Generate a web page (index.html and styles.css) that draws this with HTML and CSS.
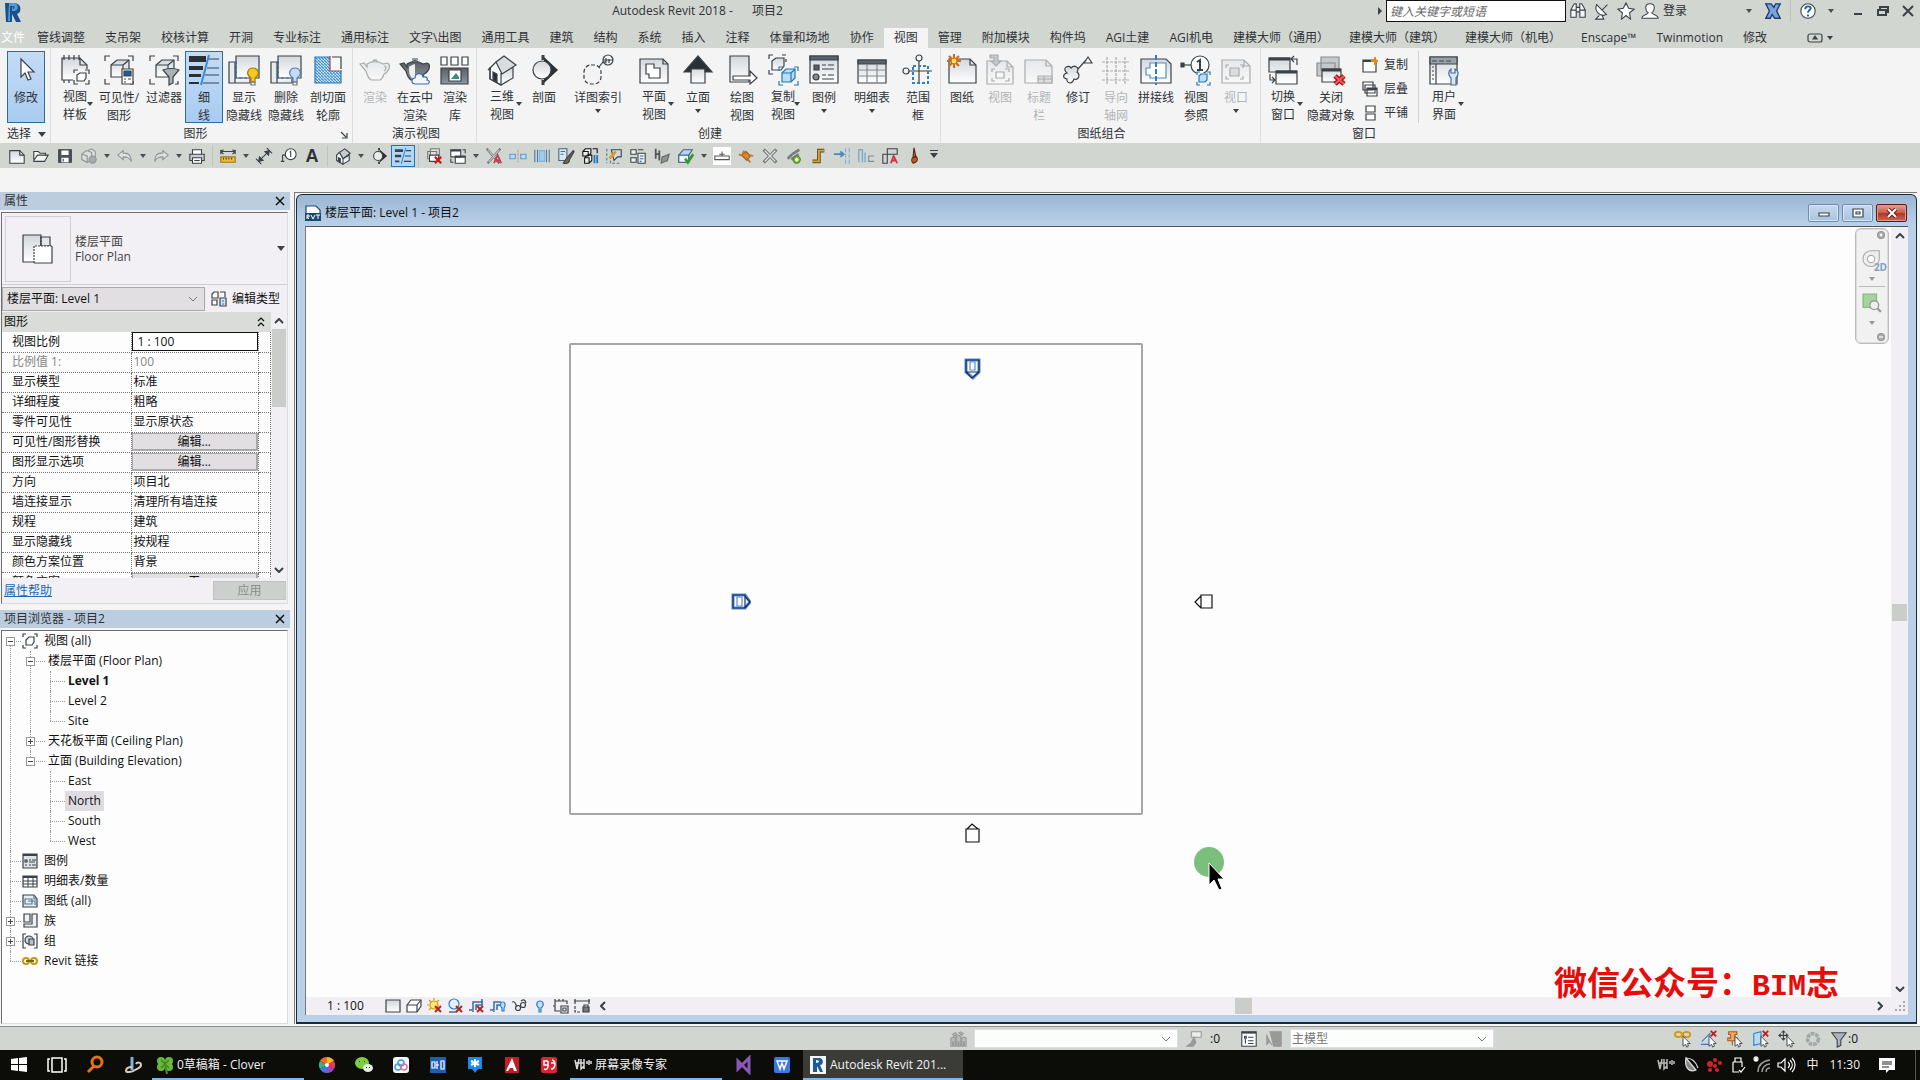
FILE: index.html
```html
<!DOCTYPE html>
<html lang="zh-CN">
<head>
    <meta charset="UTF-8">
    <meta name="viewport" content="width=device-width, initial-scale=1.0">
    <title>Autodesk Revit 2018 - 项目2</title>
    <link rel="stylesheet" href="styles.css">
</head>
<body>
    <!-- Icon sprite -->
    <svg class="sprite" aria-hidden="true">
        <defs>
            <linearGradient id="g" x1="0" y1="0" x2="0" y2="1"><stop offset="0" stop-color="#d3d7db"/><stop offset="1" stop-color="#ffffff"/></linearGradient>
            <linearGradient id="gd" x1="0" y1="0" x2="0" y2="1"><stop offset="0" stop-color="#5a5f66"/><stop offset="1" stop-color="#8f959c"/></linearGradient>
            <pattern id="hatch" width="3" height="3" patternUnits="userSpaceOnUse"><path d="M0 0l3 3" stroke="#3d8fd0" stroke-width="1.3"/></pattern>
        </defs>

        <!-- ribbon, 32px -->
        <symbol id="i-modify" viewBox="0 0 32 32"><path fill="#fff" d="M11 5v18l4-4 3 7 3-1-3-7h6z"/></symbol>
        <symbol id="i-template" viewBox="0 0 32 32"><path fill="url(#g)" d="M3 4h18l7 7v15H3z"/><path d="M5 1v5M10 1v5M15 1v5M20 1v5M5 26v3M10 26v3M21 4v7h7"/><path fill="#f4f4f4" stroke="none" d="M14 15h17v16H14z"/><path d="M15 19v-3h4M26 16h4v4M30 26v4h-4M19 30h-4v-4"/><path fill="#fff" d="M18 21l3-2h6v5l-2 3h-7z"/></symbol>
        <symbol id="i-visible" viewBox="0 0 32 32"><path d="M2 7V2h5M25 2h5v5M7 30H2v-5M30 27v3h-3"/><path fill="url(#g)" d="M8 11l6-5h12v11l-5 6H8z"/><path d="M8 11h12v12M20 11l6-5"/><path fill="#fff" d="M19 15h11v15H19z"/><path fill="#1f5c99" d="M21 17h7v5h-7z"/><path d="M21 25h2M25 25h3M21 28h2"/></symbol>
        <symbol id="i-filter" viewBox="0 0 32 32"><path d="M2 7V2h5M25 2h5v5M7 30H2v-5M30 27v3h-3"/><path fill="url(#g)" d="M8 11l6-5h12v11l-5 6H8z"/><path d="M8 11h12v6M20 11l6-5"/><path fill="#a9b0b6" d="M15 16c4-2 12-2 16 0l-6 7v6l-4 2v-8z"/></symbol>
        <symbol id="i-thin" viewBox="0 0 32 32"><path fill="#2b3036" stroke="none" d="M1 2h17v6H1zM1 12h14v4H1zM1 20h12v3H1zM1 28h10v2H1z"/><path d="M20 5h11M19 14h12M17 21h14M15 29h16"/><path stroke="#3c8ad8" stroke-width="2" d="M21 1l-8 30"/></symbol>
        <symbol id="i-showhid" viewBox="0 0 32 32"><path fill="url(#g)" d="M8 2h23v22H8z"/><path fill="#e6e8ea" fill-opacity=".8" d="M1 8h6v21H1zM1 29h21v-4"/><path stroke="#2d6cb5" stroke-dasharray="3 2" d="M8 7v17h14"/><path fill="#f7c820" stroke="#a97a08" d="M23 24c-6-4-3-10 2-10s8 6 2 10v4h-4z"/><path stroke="#777" d="M23 28h4v3h-4z"/></symbol>
        <symbol id="i-delhid" viewBox="0 0 32 32"><path fill="url(#g)" d="M8 2h23v22H8z"/><path fill="#e6e8ea" fill-opacity=".8" d="M1 8h6v21H1zM1 29h21v-4"/><path stroke="#2d6cb5" stroke-dasharray="3 2" d="M8 7v17h14"/><path fill="#c4dcf6" stroke="#4c7fb5" d="M23 24c-6-4-3-10 2-10s8 6 2 10v4h-4z"/><path stroke="#777" d="M23 28h4v3h-4z"/></symbol>
        <symbol id="i-profile" viewBox="0 0 32 32"><path fill="#d5e9f8" stroke="none" d="M3 3h26v26H3z"/><path fill="url(#hatch)" stroke="#2b78c0" d="M3 3h26v26H3z"/><path fill="#f7f7f7" stroke="none" d="M18 2h12v15H18z"/><path stroke="#a34046" d="M18 2v15h12"/><path d="M20 3h9v12"/></symbol>
        <symbol id="i-teapot" viewBox="0 0 32 32"><path fill="url(#g)" d="M8 10c4-3 12-3 16 0l4-1c4 1 3 8-3 11-1 3-2 5-4 6H12c-3-2-4-5-5-9L1 10l4-1 3 4z"/><path d="M13 8c1-2 5-2 6 0M14 6h4M25 12c3 0 2 4 0 5"/></symbol>
        <symbol id="i-cloud" viewBox="0 0 32 32"><path fill="url(#gd)" d="M8 10c4-3 12-3 16 0l4-1c4 1 3 8-3 11-1 3-2 5-4 6H12c-3-2-4-5-5-9L1 10l4-1 3 4z"/><path d="M13 8c1-2 5-2 6 0M13 5h6"/><path fill="#eee" stroke="none" d="M10 13c2-2 6-3 6-3v14h-3c-3-3-3-7-3-11z"/><path fill="#f2f7ff" stroke="#3c69b0" d="M16 30c-5-1-3-6 0-6 0-5 7-6 8-1 4-1 5 2 4 3 4 1 2 4 0 4z"/></symbol>
        <symbol id="i-gallery" viewBox="0 0 32 32"><path fill="#fff" d="M2 3h6v8H2zM12 3h7v8h-7zM23 3h6v8h-6z"/><path fill="url(#gd)" d="M2 14h27v16H2z"/><path fill="#fff" d="M10 16h12v11H10z"/><path fill="#3f8c82" stroke="none" d="M12 25l5-6 3 4v2z"/></symbol>
        <symbol id="i-house" viewBox="0 0 32 32"><path fill="url(#g)" d="M4 14l11 6 12-7v11l-12 7-11-6z"/><path fill="#fafbfc" stroke="none" d="M5 14l5-5 5 10v11L5 25z"/><path fill="#d9dde1" d="M10 8l8-6 12 9-14 9z"/><path d="M10 8l-8 8M4 14v11l11 6V19"/><path fill="#2b3036" d="M7 18l4 2v8l-4-2z"/></symbol>
        <symbol id="i-section" viewBox="0 0 32 32"><path fill="#2b3036" stroke="none" d="M16 3l14 13-14 13z"/><circle fill="url(#g)" cx="14" cy="16" r="9"/><path stroke-width="3" d="M15 1v5M15 26v5"/></symbol>
        <symbol id="i-callout" viewBox="0 0 32 32"><rect fill="none" x="2" y="11" width="17" height="19" rx="7" stroke-dasharray="4 2"/><path d="M17 13l4-5h3"/><circle cx="26" cy="6" r="5"/><path d="M21 6h10M24 9V4M27 9V5"/></symbol>
        <symbol id="i-plan" viewBox="0 0 32 32"><path fill="url(#g)" d="M2 5h23l5 5v19H2z"/><path d="M25 5v5h5"/><path fill="#fff" d="M8 10h8v4h6v10H11v-4H8z"/></symbol>
        <symbol id="i-elev" viewBox="0 0 32 32"><path fill="url(#g)" d="M9 14h14v15H9z"/><path fill="#2b3036" d="M16 2l14 16H23v-3H9v3H2z"/></symbol>
        <symbol id="i-draft" viewBox="0 0 32 32"><path fill="url(#g)" d="M4 2h19v26H4z"/><path fill="#fff" d="M7 22h17v-5l7 7-7 6v-4H7z"/></symbol>
        <symbol id="i-dup" viewBox="0 0 32 32"><path d="M2 5V1h4M15 1h4M2 16v4h4M19 5v3"/><path fill="url(#g)" d="M5 7l4-3h8v8l-3 4H5z"/><g stroke="#2377b8"><path d="M12 17v-4h4M27 13h4v4M12 27v4h4M31 27v4h-4"/><path fill="#b9def6" d="M15 19l4-4h9v9l-4 4h-9z"/><path d="M15 19h9v9M24 19l4-4"/></g></symbol>
        <symbol id="i-legend" viewBox="0 0 32 32"><path fill="url(#g)" d="M2 2h28v27H2z"/><path fill="#59616a" d="M2 2h28v4H2z"/><path fill="#59616a" d="M6 11h5v5H6z"/><circle fill="#818991" cx="8" cy="23" r="3"/><path d="M14 11h4M20 11h6M14 15h12M14 21h4M20 21h6M14 25h12"/></symbol>
        <symbol id="i-schedule" viewBox="0 0 32 32"><path fill="url(#g)" d="M2 6h28v23H2z"/><path fill="#59616a" d="M2 6h28v4H2z"/><path stroke="#838a90" d="M2 16h28M2 22h28M11 10v19M21 10v19"/></symbol>
        <symbol id="i-scope" viewBox="0 0 32 32"><circle cx="17" cy="4" r="3"/><circle cx="4" cy="17" r="3"/><path d="M17 7v22M7 17h23"/><path stroke="#2d7fc8" stroke-width="2" stroke-dasharray="3 2" d="M11 12h15v17H11z"/></symbol>
        <symbol id="i-sheet" viewBox="0 0 32 32"><path fill="url(#g)" d="M3 5h21l6 6v18H3z"/><path d="M24 5v6h6"/><path stroke="#d36a13" stroke-width="2" d="M8 0v14M1 7h14M3 2l10 10M13 2L3 12"/><circle fill="#ffe25c" stroke="#d36a13" cx="8" cy="7" r="3"/></symbol>
        <symbol id="i-sheetview" viewBox="0 0 32 32"><path fill="url(#g)" d="M3 7h20l6 6v17H3z"/><path d="M23 7v6h6M8 18v-3h3M21 15h4v3M8 24v3h3M25 24v3h-4"/><path fill="#fff" d="M12 18h8v6h-8z"/><path fill="#888" d="M6 1h8v6h3l-5 5-5-5h3V4H6z"/></symbol>
        <symbol id="i-titleblk" viewBox="0 0 32 32"><path fill="url(#g)" d="M2 6h21l6 6v17H2z"/><path d="M23 6v6h6"/><path fill="#bbb" d="M15 22h14v7H15zM15 25h14M21 22v7"/></symbol>
        <symbol id="i-revision" viewBox="0 0 32 32"><path fill="url(#g)" d="M5 19c-6-5 2-9 4-5 4-4 9 0 6 4 4 3 1 9-3 7-2 6-8 4-7 0-5-1-4-5 0-6z"/><path d="M16 15l8-9M22 9l4-6 4 6z"/></symbol>
        <symbol id="i-grid" viewBox="0 0 32 32"><path stroke-dasharray="3 1" d="M2 8h28M2 17h28M2 26h28M7 3v28M16 3v28M25 3v28"/></symbol>
        <symbol id="i-match" viewBox="0 0 32 32"><path fill="url(#g)" d="M1 5h25l5 5v19H1z"/><path fill="#fff" stroke="#548ec1" d="M6 14h4v-5h16v15H10v-3H6z"/><path stroke="#2d7fc8" stroke-width="2" stroke-dasharray="5 2" d="M16 1v30"/></symbol>
        <symbol id="i-viewref" viewBox="0 0 32 32"><circle fill="#fff" cx="20" cy="11" r="9"/><path d="M4 11h7"/><path fill="#3a4248" d="M1 9h3v4H1z"/><path stroke-width="2" d="M17 8l3-2v10M17 16h6"/><path fill="#f4f4f4" stroke="none" d="M16 19h15v12H16z"/><g stroke="#2377b8"><path d="M17 21v-3h3M27 18h3v3M17 28v3h3M30 28v3h-3"/><path fill="#b9def6" d="M19 22l2-2h6v6l-2 2h-6z"/></g></symbol>
        <symbol id="i-viewport" viewBox="0 0 32 32"><path fill="url(#g)" d="M2 6h22l6 6v17H2z"/><path d="M24 6v6h6M6 14v-3h3M20 11h3v3M6 22v3h3M23 22v3h-3"/><path fill="#bbb" d="M10 14h9v8h-9z"/></symbol>
        <symbol id="i-switch" viewBox="0 0 32 32"><path fill="url(#g)" d="M2 4h21v14H2zM9 17h21v13H9z"/><path stroke-width="3" d="M2 5h21M9 18h21"/><path d="M25 5h5v6M27 2l-3 3 3 3M3 20v6h4M5 23l3 3-3 3"/></symbol>
        <symbol id="i-closehid" viewBox="0 0 32 32"><path fill="#c5c9cc" stroke="#858b90" d="M6 3h18v13H6zM2 9h18v13H2z"/><path fill="url(#g)" d="M7 15h19v13H7z"/><path stroke-width="3" d="M7 16h19"/><path stroke="#a31419" stroke-width="5" d="M20 22l9 8M29 22l-9 8"/><path stroke="#f0605f" stroke-width="2" d="M20 22l9 8M29 22l-9 8"/></symbol>
        <symbol id="i-ui" viewBox="0 0 32 32"><path fill="url(#g)" d="M2 3h27v27H2z"/><path fill="#9aa1a8" d="M2 3h27v7H2z"/><path d="M8 10v20M4 7h5M11 7h5M18 7h5M4 13h2M4 17h2M4 21h2M4 25h2"/><path fill="#d5e6f7" stroke="#4b6d8d" d="M23 15v4h4v-4c4 2 4 6 1 9v7h-5v-7c-3-3-3-7 0-9z"/></symbol>

        <!-- small, 20px -->
        <symbol id="s-new" viewBox="0 0 20 20"><path fill="url(#g)" d="M2 4h11l5 5v9H2z"/><path d="M13 4v5h5"/></symbol>
        <symbol id="s-open" viewBox="0 0 20 20"><path fill="#f3f3f3" d="M2 15V5h5l2 2h6v3M2 15l4-6h12l-4 7H2z"/></symbol>
        <symbol id="s-save" viewBox="0 0 20 20"><path fill="#4a525a" d="M3 3h14v14H3z"/><path fill="#fff" stroke="none" d="M6 4h8v5H6zM6 12h8v5H6z"/><path d="M8 13v3"/></symbol>
        <symbol id="s-sync" viewBox="0 0 20 20"><g stroke="#909598"><path fill="#dcdedc" d="M2 8l5-4 6 2v8l-5 3-6-3zM9 4l4-2 4 3v6M2 8l6 2v7"/><circle fill="#a6aaac" cx="14" cy="14" r="4"/></g></symbol>
        <symbol id="s-undo" viewBox="0 0 20 20"><path fill="#dfe2df" stroke="#8d9294" d="M2 9l6-5v3c6-1 9 3 9 9-2-4-4-5-9-5v3z"/></symbol>
        <symbol id="s-redo" viewBox="0 0 20 20"><path fill="#dfe2df" stroke="#8d9294" d="M18 9l-6-5v3c-6-1-9 3-9 9 2-4 4-5 9-5v3z"/></symbol>
        <symbol id="s-print" viewBox="0 0 20 20"><path fill="#fff" d="M5 8V3h10v5"/><path fill="#c9cdd0" d="M2 8h16v7H2z"/><path fill="#fff" d="M5 12h10v6H5z"/><path d="M7 15h6"/></symbol>
        <symbol id="s-measure" viewBox="0 0 20 20"><path d="M2 5h16M2 3v5M18 3v5M5 3L2 5l3 3M15 3l3 2-3 3"/><path fill="#f1bd2f" stroke="#a0761a" d="M2 11h16v6H2z"/><path d="M5 12v2M8 12v2M11 12v2M14 12v2"/></symbol>
        <symbol id="s-dim" viewBox="0 0 20 20"><path d="M4 16L16 4M1 13l6 6M13 1l6 6"/><path fill="#3a4248" d="M4 16l1-5 4 4zM16 4l-1 5-4-4z"/></symbol>
        <symbol id="s-tag" viewBox="0 0 20 20"><circle fill="#fff" cx="13" cy="8" r="6"/><path d="M7 9H4v7M2 16h4M12 6l1-1v6"/></symbol>
        <symbol id="s-house" viewBox="0 0 20 20"><path fill="url(#g)" d="M3 9l7 4 7-4v6l-7 4-7-4z"/><path fill="#c7cbce" d="M6 6l6-4 6 5-8 6z"/><path fill="#fff" d="M3 9l3-3 4 7v6l-7-4z"/><path fill="#3a4248" d="M5 12l2 1v4l-2-1z"/></symbol>
        <symbol id="s-section" viewBox="0 0 20 20"><path fill="#2b3036" stroke="none" d="M11 3l8 7-8 7z"/><circle fill="#e9eceb" cx="9" cy="10" r="5"/><path stroke-width="2" d="M10 1v3M10 16v3"/></symbol>
        <symbol id="s-thin" viewBox="0 0 20 20"><path stroke-width="3" d="M1 4h9M1 10h7"/><path stroke-width="2" d="M1 16h5"/><path d="M13 4h6M12 10h7M11 16h8"/><path stroke="#3c8ad8" d="M13 1L8 19"/></symbol>
        <symbol id="s-closehid" viewBox="0 0 20 20"><path fill="#dcdfdc" stroke="#777" d="M6 2h10v8H6zM3 5h10v8H3z"/><path fill="#fff" d="M5 9h10v7H5z"/><path stroke="#c4191e" stroke-width="2.5" d="M11 11l7 7M18 11l-7 7"/></symbol>
        <symbol id="s-switch" viewBox="0 0 20 20"><path fill="#fff" d="M2 3h11v8H2zM7 10h11v8H7z"/><path stroke-width="2" d="M2 4h11M7 11h11"/><path d="M15 3h3v4M2 13v4h3"/></symbol>
        <symbol id="s-tools" viewBox="0 0 20 20"><path stroke="#62686d" stroke-width="2.5" d="M2 2l14 16M17 2L3 18"/><path stroke="#c7ccca" d="M3 3l8 9M16 3L4 17"/><path stroke="#c73d52" stroke-width="2" d="M10 18l4-9 4 9M12 15h4"/></symbol>
        <symbol id="s-split" viewBox="0 0 20 20"><path fill="#b9daf1" stroke="#5a9fd0" d="M1 8h6v5H1zM13 8h6v5h-6z"/><path stroke="#d09087" stroke-dasharray="3 1" d="M10 3v14"/></symbol>
        <symbol id="s-space" viewBox="0 0 20 20"><path fill="#9fcdec" stroke="#7fb5dc" d="M7 4h6v12H7z"/><path stroke="#55799a" d="M2 3v14M5 3v14M15 3v14M18 3v14"/></symbol>
        <symbol id="s-paint" viewBox="0 0 20 20"><path fill="#d9e8f5" stroke="#4a6580" d="M2 2h9v13H2z"/><path stroke="#2f6fae" d="M4 5h5M4 8h3"/><path fill="#77624a" d="M18 4l-7 8-4 6c5 1 7-1 7-4l5-9z"/></symbol>
        <symbol id="s-blocks" viewBox="0 0 20 20"><g stroke="#111"><path fill="#eee" d="M2 5l3-3h6v5l-3 3H2zM4 12l3-3h5v6l-3 3H4zM2 5h6v5M4 12h5v6"/><path stroke="#2377c8" stroke-width="2" d="M15 9v9M18 9v9"/><path d="M13 2h5v5"/></g></symbol>
        <symbol id="s-region" viewBox="0 0 20 20"><path stroke="#55799a" stroke-dasharray="3 2" d="M2 2v16M6 10v8h11"/><path fill="#c9dcec" d="M7 3h11v8h-4l-4 4z"/><path stroke="#e8981c" stroke-width="3" d="M5 13l7-8"/></symbol>
        <symbol id="s-sheetlist" viewBox="0 0 20 20"><path fill="#eef1f2" d="M2 3h6v5H2zM2 12h6v5H2zM10 7h8v11h-8zM10 3h6"/><path stroke="#2f6fae" d="M12 10h4M12 13h4M12 16h2"/></symbol>
        <symbol id="s-align" viewBox="0 0 20 20"><path stroke="#555" stroke-width="2" d="M3 2v11M7 4v11M3 8h4"/><path fill="#8f9595" stroke="#666" d="M10 11l8-3-2 7-7 3z"/></symbol>
        <symbol id="s-check" viewBox="0 0 20 20"><path fill="#bcd5ee" stroke="#3e6489" d="M2 9l5-6h10l-4 6v8H2z"/><path fill="#eef5fb" stroke="#3e6489" d="M2 9h11v8H2z"/><path stroke="#2f9a35" stroke-width="3" d="M9 13l3 4 6-9"/></symbol>
        <symbol id="s-level" viewBox="0 0 20 20"><path fill="#fff" stroke="none" d="M0 0h20v20H0z"/><path stroke="#555" d="M2 10h16v4H2zM10 5v5M7 8h6"/></symbol>
        <symbol id="s-plug" viewBox="0 0 20 20"><path fill="#d9862c" stroke="#9a5b1c" d="M5 9l5-4 5 5-4 5z"/><path stroke="#b97a3c" stroke-width="2" d="M2 8l4 2M8 4L6 8M14 9l4 1M12 14l3 3"/></symbol>
        <symbol id="s-wrench" viewBox="0 0 20 20"><path stroke="#666b6f" stroke-width="3.5" d="M3 3l14 14M17 3L3 17"/><path stroke="#e2e4e2" stroke-width="1.5" d="M4 4l12 12M16 4L4 16"/></symbol>
        <symbol id="s-link" viewBox="0 0 20 20"><path stroke="#777e82" stroke-width="3" d="M3 13l5-5M8 8l8-5M7 14l8-6"/><circle fill="#74b72e" stroke="#4d8a18" cx="13" cy="14" r="4"/><path stroke="#fff" stroke-width="2" d="M13 12v4M11 14h4"/></symbol>
        <symbol id="s-pipe" viewBox="0 0 20 20"><path stroke="#5a4a24" stroke-width="4" d="M17 4h-6v12H4"/><path stroke="#d5a62b" stroke-width="2" d="M17 4h-6v12H4"/></symbol>
        <symbol id="s-branch" viewBox="0 0 20 20"><path stroke="#4c87b6" stroke-width="2" d="M1 8h10M8 5l4 3-4 3"/><path stroke="#7db0d8" d="M14 1v5M14 8v4M14 14v5M18 1v5M18 8v4M18 14v5"/></symbol>
        <symbol id="s-ducts" viewBox="0 0 20 20"><path stroke="#7da8c8" stroke-width="1.5" d="M2 17V3h4v14M9 6v11"/><path stroke="#7d8a90" d="M19 10h-6v6h6"/></symbol>
        <symbol id="s-hammer" viewBox="0 0 20 20"><path fill="#cfd3d2" d="M2 8h5v10H2zM7 2h11v6H7z"/><path stroke="#cf3349" stroke-width="2" d="M11 18l3-8 4 8M12 15h4"/></symbol>
        <symbol id="s-brush" viewBox="0 0 20 20"><path fill="#bd5c24" stroke="#55290f" d="M10 1l2 9-2 2-1-2zM9 11h4c2 4 0 6-4 7-2-2-2-5 0-7z"/></symbol>

        <symbol id="s-find" viewBox="0 0 20 20"><path fill="#f3f4f3" d="M4 5l2-3h2v7H2zM16 5l-2-3h-2v7h6zM2 9h6v8H2zM12 9h6v8h-6zM8 6h4v5H8z"/></symbol>
        <symbol id="s-dish" viewBox="0 0 20 20"><path fill="#fff" d="M4 3l11 11c-7 3-14-4-11-11zM10 9l6-6M7 15l-4 4h9l-2-4"/></symbol>
        <symbol id="s-star" viewBox="0 0 20 20"><path fill="#fff" d="M10 1l3 6 6 1-5 4 1 7-5-4-5 4 1-7-5-4 6-1z"/></symbol>
        <symbol id="s-user" viewBox="0 0 20 20"><path fill="#fff" d="M10 2c7 0 5 8 2 10 0 2 7 2 7 6H1c0-4 7-4 7-6C5 10 3 2 10 2z"/></symbol>
        <symbol id="s-exchange" viewBox="0 0 20 20"><path fill="#7ca2dc" stroke="#1d3a74" stroke-width="1.5" d="M2 2h6l3 4 2-4h5l-4 8 4 8h-6l-3-4-2 4H2l4-8z"/></symbol>
        <symbol id="s-help" viewBox="0 0 20 20"><circle fill="#fff" cx="10" cy="10" r="8"/><path stroke="#1f62a5" stroke-width="2.2" d="M7 8c0-4 6-4 6-1 0 2-3 2-3 5M10 14v2"/></symbol>

        <!-- browser tree and view control icons -->
        <symbol id="t-views" viewBox="0 0 16 16"><path d="M1 4V1h3M12 1h3v3M1 12v3h3M15 12v3h-3"/><path fill="#fff" d="M4 7l3-3h5v5l-2 3H4z"/></symbol>
        <symbol id="t-legend" viewBox="0 0 16 16"><path fill="#dfe3e8" d="M1 1h14v14H1z"/><path stroke-width="2" d="M1 2h14"/><path d="M3 7h2v2H3zM7 7h2M10 7h4M7 9h6M3 12h2M7 12h2M10 12h4"/></symbol>
        <symbol id="t-sched" viewBox="0 0 16 16"><path fill="#fff" d="M1 3h14v11H1z"/><path stroke-width="2" d="M1 4h14"/><path stroke-width="1" d="M1 8h14M1 11h14M6 4v10M11 4v10"/></symbol>
        <symbol id="t-sheet" viewBox="0 0 16 16"><path fill="#e4eef6" d="M1 2h11l3 4v8H1z"/><path stroke="#55799a" d="M3 6h7v5H3zM6 8h7v4M12 2v4h3"/></symbol>
        <symbol id="t-family" viewBox="0 0 16 16"><path fill="#eef0f3" d="M2 1h6v8H2zM10 1h5v13H2v-3h8z"/></symbol>
        <symbol id="t-group" viewBox="0 0 16 16"><path d="M4 1H1v14h3M12 1h3v14h-3"/><circle fill="#cfd6de" cx="7" cy="7" r="4"/><path fill="#b6c0cb" d="M7 6h5v6H7z"/></symbol>
        <symbol id="t-link" viewBox="0 0 16 16"><ellipse stroke="#c29a12" stroke-width="2" cx="4" cy="8" rx="3" ry="3"/><ellipse stroke="#c29a12" stroke-width="2" cx="12" cy="8" rx="3" ry="3"/><path stroke="#7d6410" stroke-width="2" d="M4 8h8"/></symbol>
        <symbol id="v-detail" viewBox="0 0 16 16"><path fill="url(#g)" d="M1 2h14v12H1z"/></symbol>
        <symbol id="v-style" viewBox="0 0 16 16"><path fill="#fff" d="M1 7l4-5h10v6l-4 6H1z"/><path d="M1 7h10v7M11 7l4-5"/></symbol>
        <symbol id="v-sun" viewBox="0 0 16 16"><circle fill="#ffe67a" stroke="#d09a10" cx="7" cy="7" r="4"/><path stroke="#d09a10" d="M7 0v2M0 7h2M2 2l2 2M12 2l-2 2M2 12l2-2"/><path stroke="#b3261c" stroke-width="2" d="M8 8l6 6M14 8l-6 6"/></symbol>
        <symbol id="v-shadow" viewBox="0 0 16 16"><circle fill="#e3f1fb" stroke="#2d7fc8" cx="6" cy="6" r="5"/><path d="M1 14h8"/><path stroke="#b3261c" stroke-width="2" d="M8 8l6 6M14 8l-6 6"/></symbol>
        <symbol id="v-crop" viewBox="0 0 16 16"><path stroke="#336fa8" stroke-width="1.5" d="M0 12h4V4h10M4 13v1M7 12V7h7M13 1v6"/><path stroke="#b3261c" stroke-width="2" d="M8 8l6 6M14 8l-6 6"/></symbol>
        <symbol id="v-cropvis" viewBox="0 0 16 16"><path stroke="#336fa8" stroke-width="1.5" d="M0 12h4V4h7M4 13v1M7 12V7h3"/><path fill="#bfe0f8" stroke="#2d7fc8" d="M12 10c-3-3-1-6 1-6s3 3 1 6v3h-2z"/></symbol>
        <symbol id="v-glasses" viewBox="0 0 16 16"><path d="M1 4c3-1 3 1 5 5M10 3c3-2 4-1 5 2"/><ellipse cx="7" cy="10" rx="2.500" ry="2.500"/><ellipse cx="12" cy="7" rx="2.500" ry="2.500"/></symbol>
        <symbol id="v-bulb" viewBox="0 0 16 16"><path fill="#bfe0f8" stroke="#2d7fc8" d="M7 10c-4-3-2-7 1-7s5 4 1 7v4H7z"/></symbol>
        <symbol id="v-temp" viewBox="0 0 16 16"><path d="M2 3h12v3M2 3v10h5M2 1v2M6 1v2M10 1v2M0 8h2"/><path fill="#fff" d="M8 8h7v7H8zM10 10h3v3h-3z"/></symbol>
        <symbol id="v-lock" viewBox="0 0 16 16"><path d="M0 3h16M1 1v5M15 1v5"/><path stroke-dasharray="3 1" d="M1 8v6h6"/><path fill="#777" d="M9 9h6v5H9z"/><path d="M10 9V7h4v2"/></symbol>

        <!-- selection options in the status bar -->
        <symbol id="c-ptr" viewBox="0 0 20 20"><path fill="#fff" stroke-width="1" d="M10 7v11l3-2 1 3 2-1-1-3h3z"/></symbol>
    </svg>

    <div class="app">
        <header class="titlebar">
            <svg class="logo" viewBox="0 0 16 20"><path fill="#17508a" d="M0 1h9c8 0 8 10 3 11l4 8h-5l-4-8v8H1z"/><path fill="#4f9bd6" d="M4 1h5c5 0 5 8 0 8H7V5h1v2c2 0 2-3 0-3H5v15H3z"/></svg>
            <h1 class="title">Autodesk Revit 2018 - <span class="doc-name">项目2</span></h1>
            <div class="infocenter">
                <button class="caret-btn caret-right" aria-label="展开搜索"></button>
                <input class="search" type="text" placeholder="键入关键字或短语" aria-label="搜索">
                <button class="tool"><svg class="icon"><use href="#s-find"/></svg></button>
                <button class="tool"><svg class="icon"><use href="#s-dish"/></svg></button>
                <button class="tool"><svg class="icon"><use href="#s-star"/></svg></button>
                <button class="login"><svg class="icon"><use href="#s-user"/></svg>登录</button>
                <button class="caret-btn" aria-label="登录选项"></button>
                <button class="tool tool-wide"><svg class="icon"><use href="#s-exchange"/></svg></button>
                <button class="tool tool-wide"><svg class="icon"><use href="#s-help"/></svg></button>
                <button class="caret-btn" aria-label="帮助选项"></button>
            </div>
            <div class="window-controls">
                <button aria-label="最小化"><svg class="glyph" viewBox="0 0 12 12"><path d="M2 9h8"/></svg></button>
                <button aria-label="还原"><svg class="glyph" viewBox="0 0 12 12"><path d="M3 5V2h8v5H9M1 5h8v5H1z"/></svg></button>
                <button aria-label="关闭"><svg class="glyph" viewBox="0 0 12 12"><path d="M1 1l10 10M11 1L1 11"/></svg></button>
            </div>
        </header>

        <nav class="tabs">
            <button class="tab tab-file">文件</button>
            <button class="tab">管线调整</button>
            <button class="tab">支吊架</button>
            <button class="tab">校核计算</button>
            <button class="tab">开洞</button>
            <button class="tab">专业标注</button>
            <button class="tab">通用标注</button>
            <button class="tab">文字\出图</button>
            <button class="tab">通用工具</button>
            <button class="tab">建筑</button>
            <button class="tab">结构</button>
            <button class="tab">系统</button>
            <button class="tab">插入</button>
            <button class="tab">注释</button>
            <button class="tab">体量和场地</button>
            <button class="tab">协作</button>
            <button class="tab active">视图</button>
            <button class="tab">管理</button>
            <button class="tab">附加模块</button>
            <button class="tab">构件坞</button>
            <button class="tab">AGI土建</button>
            <button class="tab">AGI机电</button>
            <button class="tab">建模大师（通用）</button>
            <button class="tab">建模大师（建筑）</button>
            <button class="tab">建模大师（机电）</button>
            <button class="tab">Enscape™</button>
            <button class="tab">Twinmotion</button>
            <button class="tab">修改</button>
            <button class="ribbon-toggle" aria-label="最小化功能区"><svg class="toggle-icon" viewBox="0 0 16 10"><rect x="1" y="1" width="14" height="8" rx="2"/><path fill="#3a4248" d="M6 6l2-3 2 3z"/></svg><span class="caret"></span></button>
        </nav>

        <div class="ribbon">
            <section class="group group-select">
                <div class="group-body">
                    <button class="rbtn on"><svg><use href="#i-modify"/></svg><span>修改</span></button>
                </div>
                <div class="group-name">选择 <span class="caret caret-big"></span></div>
            </section>
            <section class="group group-graphics">
                <div class="group-body">
                    <button class="rbtn w-40 side"><svg><use href="#i-template"/></svg><span>视图<br>样板</span></button>
                    <button class="rbtn w-48"><svg><use href="#i-visible"/></svg><span>可见性/<br>图形</span></button>
                    <button class="rbtn w-42"><svg><use href="#i-filter"/></svg><span>过滤器</span></button>
                    <button class="rbtn on"><svg><use href="#i-thin"/></svg><span>细<br>线</span></button>
                    <button class="rbtn w-42"><svg><use href="#i-showhid"/></svg><span>显示<br>隐藏线</span></button>
                    <button class="rbtn w-42"><svg><use href="#i-delhid"/></svg><span>删除<br>隐藏线</span></button>
                    <button class="rbtn w-42"><svg><use href="#i-profile"/></svg><span>剖切面<br>轮廓</span></button>
                </div>
                <div class="group-name">图形<svg class="launcher" viewBox="0 0 8 8"><path d="M1 1l5 5M7 2v5H2"/></svg></div>
            </section>
            <section class="group group-present">
                <div class="group-body">
                    <button class="rbtn" disabled><svg><use href="#i-teapot"/></svg><span>渲染</span></button>
                    <button class="rbtn w-42"><svg><use href="#i-cloud"/></svg><span>在云中<br>渲染</span></button>
                    <button class="rbtn"><svg><use href="#i-gallery"/></svg><span>渲染<br>库</span></button>
                </div>
                <div class="group-name">演示视图</div>
            </section>
            <section class="group group-create">
                <div class="group-body">
                    <button class="rbtn w-44 side"><svg><use href="#i-house"/></svg><span>三维<br>视图</span></button>
                    <button class="rbtn w-40"><svg><use href="#i-section"/></svg><span>剖面</span></button>
                    <button class="rbtn w-68 below"><svg><use href="#i-callout"/></svg><span>详图索引</span></button>
                    <button class="rbtn w-44 side"><svg><use href="#i-plan"/></svg><span>平面<br>视图</span></button>
                    <button class="rbtn w-44 below"><svg><use href="#i-elev"/></svg><span>立面</span></button>
                    <button class="rbtn w-44"><svg><use href="#i-draft"/></svg><span>绘图<br>视图</span></button>
                    <button class="rbtn side"><svg><use href="#i-dup"/></svg><span>复制<br>视图</span></button>
                    <button class="rbtn w-44 below"><svg><use href="#i-legend"/></svg><span>图例</span></button>
                    <button class="rbtn w-52 below"><svg><use href="#i-schedule"/></svg><span>明细表</span></button>
                    <button class="rbtn w-40"><svg><use href="#i-scope"/></svg><span>范围<br>框</span></button>
                </div>
                <div class="group-name">创建</div>
            </section>
            <section class="group group-sheets">
                <div class="group-body">
                    <button class="rbtn"><svg><use href="#i-sheet"/></svg><span>图纸</span></button>
                    <button class="rbtn" disabled><svg><use href="#i-sheetview"/></svg><span>视图</span></button>
                    <button class="rbtn w-40" disabled><svg><use href="#i-titleblk"/></svg><span>标题<br>栏</span></button>
                    <button class="rbtn"><svg><use href="#i-revision"/></svg><span>修订</span></button>
                    <button class="rbtn" disabled><svg><use href="#i-grid"/></svg><span>导向<br>轴网</span></button>
                    <button class="rbtn w-42"><svg><use href="#i-match"/></svg><span>拼接线</span></button>
                    <button class="rbtn"><svg><use href="#i-viewref"/></svg><span>视图<br>参照</span></button>
                    <button class="rbtn w-42 below" disabled><svg><use href="#i-viewport"/></svg><span>视口</span></button>
                </div>
                <div class="group-name">图纸组合</div>
            </section>
            <section class="group group-windows">
                <div class="group-body">
                    <button class="rbtn w-44 side"><svg><use href="#i-switch"/></svg><span>切换<br>窗口</span></button>
                    <button class="rbtn w-52"><svg><use href="#i-closehid"/></svg><span>关闭<br>隐藏对象</span></button>
                    <div class="small-stack">
                        <button class="sbtn"><svg viewBox="0 0 16 16"><path fill="#fff" d="M1 3h13v12H1z"/><path stroke-width="2" d="M1 4h13"/><path stroke="#e08a1c" stroke-width="2" d="M13 0v8M9 4h7"/></svg>复制</button>
                        <button class="sbtn"><svg viewBox="0 0 16 16"><path fill="#fff" d="M1 1h10v8H1zM3 4h10v8H3zM5 7h10v8H5z"/><path stroke-width="2" d="M5 8h10"/></svg>层叠</button>
                        <button class="sbtn"><svg viewBox="0 0 16 16"><path fill="#fff" d="M4 1h9v6H4zM4 9h9v6H4z"/></svg>平铺</button>
                    </div>
                    <span class="short-rule"></span>
                    <button class="rbtn w-44 side"><svg><use href="#i-ui"/></svg><span>用户<br>界面</span></button>
                </div>
                <div class="group-name">窗口</div>
            </section>
        </div>

        <div class="quick-access">
            <button class="tool"><svg class="icon"><use href="#s-new"/></svg></button>
            <button class="tool"><svg class="icon"><use href="#s-open"/></svg></button>
            <button class="tool"><svg class="icon"><use href="#s-save"/></svg></button>
            <button class="tool"><svg class="icon"><use href="#s-sync"/></svg></button>
            <button class="caret-btn" aria-label="同步选项"></button>
            <button class="tool"><svg class="icon"><use href="#s-undo"/></svg></button>
            <button class="caret-btn" aria-label="放弃列表"></button>
            <button class="tool"><svg class="icon"><use href="#s-redo"/></svg></button>
            <button class="caret-btn" aria-label="重做列表"></button>
            <button class="tool"><svg class="icon"><use href="#s-print"/></svg></button>
            <span class="rule"></span>
            <button class="tool"><svg class="icon"><use href="#s-measure"/></svg></button>
            <button class="caret-btn" aria-label="测量选项"></button>
            <button class="tool"><svg class="icon"><use href="#s-dim"/></svg></button>
            <button class="tool"><svg class="icon"><use href="#s-tag"/></svg></button>
            <button class="tool tool-text">A</button>
            <span class="rule"></span>
            <button class="tool"><svg class="icon"><use href="#s-house"/></svg></button>
            <button class="caret-btn" aria-label="三维视图选项"></button>
            <button class="tool"><svg class="icon"><use href="#s-section"/></svg></button>
            <button class="tool on"><svg class="icon"><use href="#s-thin"/></svg></button>
            <span class="rule"></span>
            <button class="tool"><svg class="icon"><use href="#s-closehid"/></svg></button>
            <button class="tool"><svg class="icon"><use href="#s-switch"/></svg></button>
            <button class="caret-btn" aria-label="切换窗口列表"></button>
            <button class="tool"><svg class="icon"><use href="#s-tools"/></svg></button>
            <button class="tool"><svg class="icon"><use href="#s-split"/></svg></button>
            <button class="tool"><svg class="icon"><use href="#s-space"/></svg></button>
            <button class="tool"><svg class="icon"><use href="#s-paint"/></svg></button>
            <button class="tool"><svg class="icon"><use href="#s-blocks"/></svg></button>
            <button class="tool"><svg class="icon"><use href="#s-region"/></svg></button>
            <button class="tool"><svg class="icon"><use href="#s-sheetlist"/></svg></button>
            <button class="tool"><svg class="icon"><use href="#s-align"/></svg></button>
            <button class="tool"><svg class="icon"><use href="#s-check"/></svg></button>
            <button class="caret-btn" aria-label="检查选项"></button>
            <button class="tool"><svg class="icon"><use href="#s-level"/></svg></button>
            <button class="tool"><svg class="icon"><use href="#s-plug"/></svg></button>
            <button class="tool"><svg class="icon"><use href="#s-wrench"/></svg></button>
            <button class="tool"><svg class="icon"><use href="#s-link"/></svg></button>
            <button class="tool"><svg class="icon"><use href="#s-pipe"/></svg></button>
            <button class="tool"><svg class="icon"><use href="#s-branch"/></svg></button>
            <button class="tool"><svg class="icon"><use href="#s-ducts"/></svg></button>
            <button class="tool"><svg class="icon"><use href="#s-hammer"/></svg></button>
            <button class="tool"><svg class="icon"><use href="#s-brush"/></svg></button>
            <button class="customize" aria-label="自定义快速访问工具栏"><span class="caret caret-big"></span></button>
        </div>

        <div class="options-bar"></div>

        <main class="workspace">
            <aside class="sidebar">
                <section class="palette properties">
                    <h2 class="palette-title">属性<button class="close" aria-label="关闭"><svg viewBox="0 0 10 10"><path d="M1 1l8 8M9 1L1 9"/></svg></button></h2>
                    <div class="palette-body">
                        <div class="type-selector">
                            <div class="type-preview"><svg viewBox="0 0 32 32"><path fill="url(#g)" d="M1 2h18v27H1z"/><path fill="#e3e7eb" d="M19 4h9v9h-9z"/><path fill="#fff" stroke="none" d="M12 13h18v17H12z"/><path stroke-dasharray="2 1" d="M12 30V13h18M19 4v9"/><path d="M12 30h18V13"/></svg></div>
                            <div class="type-name">楼层平面<br>Floor Plan</div>
                            <span class="caret caret-big"></span>
                        </div>
                        <div class="instance">
                            <select class="instance-select" aria-label="实例">
                                <option>楼层平面: Level 1</option>
                            </select>
                            <button class="edit-type"><svg viewBox="0 0 16 16"><path fill="#fff" d="M1 3l2-2h4v6H1zM9 1h5v5M1 9h5v5H1z"/><path fill="#d5e6f7" d="M9 7h6v8H9z"/><path stroke="#2f6fae" d="M11 10h2M11 13h2"/></svg>编辑类型</button>
                        </div>
                        <div class="grid-wrap">
                            <table class="props">
                                <colgroup><col class="col-name"><col><col class="col-link"></colgroup>
                                <thead>
                                    <tr><th colspan="3">图形 <svg class="chevrons" viewBox="0 0 8 10"><path d="M1 4l3-3 3 3M1 9l3-3 3 3"/></svg></th></tr>
                                </thead>
                                <tbody>
                                    <tr><td><label for="scale">视图比例</label></td><td class="cell-input"><input id="scale" type="text" value="1 : 100"></td><td></td></tr>
                                    <tr class="readonly"><td>比例值 1:</td><td>100</td><td></td></tr>
                                    <tr><td>显示模型</td><td>标准</td><td></td></tr>
                                    <tr><td>详细程度</td><td>粗略</td><td></td></tr>
                                    <tr><td>零件可见性</td><td>显示原状态</td><td></td></tr>
                                    <tr><td>可见性/图形替换</td><td class="cell-input"><button>编辑...</button></td><td></td></tr>
                                    <tr><td>图形显示选项</td><td class="cell-input"><button>编辑...</button></td><td></td></tr>
                                    <tr><td>方向</td><td>项目北</td><td></td></tr>
                                    <tr><td>墙连接显示</td><td>清理所有墙连接</td><td></td></tr>
                                    <tr><td>规程</td><td>建筑</td><td></td></tr>
                                    <tr><td>显示隐藏线</td><td>按规程</td><td></td></tr>
                                    <tr><td>颜色方案位置</td><td>背景</td><td></td></tr>
                                    <tr><td>颜色方案</td><td class="cell-input"><button>无</button></td><td></td></tr>
                                </tbody>
                            </table>
                            <div class="vscroll">
                                <button aria-label="向上滚动"><svg viewBox="0 0 10 6"><path d="M1 5l4-4 4 4"/></svg></button>
                                <div class="thumb thumb-props"></div>
                                <button class="to-end" aria-label="向下滚动"><svg viewBox="0 0 10 6"><path d="M1 1l4 4 4-4"/></svg></button>
                            </div>
                        </div>
                        <div class="palette-foot">
                            <a href="#">属性帮助</a>
                            <button class="apply" disabled>应用</button>
                        </div>
                    </div>
                </section>

                <section class="palette browser">
                    <h2 class="palette-title">项目浏览器 - 项目2<button class="close" aria-label="关闭"><svg viewBox="0 0 10 10"><path d="M1 1l8 8M9 1L1 9"/></svg></button></h2>
                    <div class="palette-body tree-box">
                        <ul class="tree">
                            <li><div class="node"><button class="twist open" aria-label="折叠"></button><svg><use href="#t-views"/></svg><span>视图 (all)</span></div>
                                <ul>
                                    <li><div class="node"><button class="twist open" aria-label="折叠"></button><span>楼层平面 (Floor Plan)</span></div>
                                        <ul>
                                            <li><div class="node"><span class="current">Level 1</span></div></li>
                                            <li><div class="node"><span>Level 2</span></div></li>
                                            <li><div class="node"><span>Site</span></div></li>
                                        </ul>
                                    </li>
                                    <li><div class="node"><button class="twist" aria-label="展开"></button><span>天花板平面 (Ceiling Plan)</span></div></li>
                                    <li><div class="node"><button class="twist open" aria-label="折叠"></button><span>立面 (Building Elevation)</span></div>
                                        <ul>
                                            <li><div class="node"><span>East</span></div></li>
                                            <li><div class="node"><span class="selected">North</span></div></li>
                                            <li><div class="node"><span>South</span></div></li>
                                            <li><div class="node"><span>West</span></div></li>
                                        </ul>
                                    </li>
                                </ul>
                            </li>
                            <li><div class="node"><svg><use href="#t-legend"/></svg><span>图例</span></div></li>
                            <li><div class="node"><svg><use href="#t-sched"/></svg><span>明细表/数量</span></div></li>
                            <li><div class="node"><svg><use href="#t-sheet"/></svg><span>图纸 (all)</span></div></li>
                            <li><div class="node"><button class="twist" aria-label="展开"></button><svg><use href="#t-family"/></svg><span>族</span></div></li>
                            <li><div class="node"><button class="twist" aria-label="展开"></button><svg><use href="#t-group"/></svg><span>组</span></div></li>
                            <li><div class="node"><svg><use href="#t-link"/></svg><span>Revit 链接</span></div></li>
                        </ul>
                    </div>
                </section>
            </aside>

            <div class="mdi">
                <section class="view-window">
                    <div class="view-title">
                        <svg class="rvt" viewBox="0 0 16 16"><path fill="#fff" stroke="#1b4a70" d="M1 1h10l4 4v10H1z"/><path fill="#1b4a70" stroke="none" d="M0 8h16v8H0z"/><path stroke="#fff" stroke-width="1" d="M2 14v-4h2v2H2l2 2M6 10l2 4 2-4M11 10h4M13 10v4"/></svg>
                        <h2>楼层平面: Level 1 - 项目2</h2>
                        <button aria-label="最小化"><svg viewBox="0 0 12 10"><path fill="#fff" d="M1 5h10v3H1z"/></svg></button>
                        <button aria-label="最大化"><svg viewBox="0 0 12 10"><path fill="#fff" d="M1 1h10v8H1zM4 4h4v2H4z"/></svg></button>
                        <button class="close-view" aria-label="关闭视图"><svg viewBox="0 0 12 10"><path stroke="#6e1d14" stroke-width="4" d="M2 1l8 8M10 1L2 9"/><path stroke="#fff" stroke-width="2" d="M2 1l8 8M10 1L2 9"/></svg></button>
                    </div>
                    <div class="view-frame">
                        <div class="canvas">
                            <div class="crop-region"></div>
                            <svg class="marker marker-north" viewBox="0 0 18 22"><path stroke="#5c8ed2" stroke-width="3" d="M2 2h13v12l-6 6-7-6z"/><path stroke="#142c66" d="M2 2h13v12H2zM2 14l6 6 7-6"/><path stroke="#5c8ed2" d="M6 4h5v8H6z"/></svg>
                            <svg class="marker marker-west" viewBox="0 0 20 18"><path stroke="#5c8ed2" stroke-width="3" d="M2 2h12l5 7-5 6H2z"/><path stroke="#142c66" d="M2 2h12v13H2zM14 3l5 6-5 6"/><path stroke="#5c8ed2" d="M6 4h5v9H6z"/></svg>
                            <svg class="marker marker-east" viewBox="0 0 20 16"><path d="M7 1h11v13H7zM7 2L1 8l6 6"/></svg>
                            <svg class="marker marker-south" viewBox="0 0 16 20"><path d="M1 6h13v13H1zM2 6l5-5 6 5"/></svg>
                            <div class="click-spot"></div>
                            <svg class="pointer" viewBox="0 0 17 29"><path fill="#000" stroke="#fff" stroke-width="1" d="M1 1v22l5-5 5 10 3-1-4-10h6z"/></svg>
                            <p class="watermark">微信公众号：<span>BIM</span>志</p>

                            <div class="nav-bar">
                                <button aria-label="关闭导航栏"><svg class="nav-dot" viewBox="0 0 8 8"><circle cx="4" cy="4" r="3.5"/><path stroke="#fff" d="M3 3l2 2M5 3L3 5"/></svg></button>
                                <button class="wheel" aria-label="二维控制盘"><svg viewBox="0 0 22 20"><path fill="#eee" stroke="#aaa" d="M10 1h9v9c0 11-18 11-18 0 0-5 4-9 9-9z"/><circle fill="#fff" stroke="#aaa" cx="10" cy="10" r="4"/></svg><span>2D</span></button>
                                <span class="caret"></span>
                                <hr>
                                <button aria-label="区域放大"><svg viewBox="0 0 18 18"><path fill="#a7d3a0" stroke="#8aba83" d="M1 1h12v12H1z"/><circle fill="#eee" stroke="#999" cx="11" cy="11" r="4"/><path stroke="#999" stroke-width="2" d="M14 14l3 3"/></svg></button>
                                <span class="caret"></span>
                                <button class="nav-last" aria-label="导航栏选项"><svg class="nav-dot" viewBox="0 0 8 8"><circle cx="4" cy="4" r="3.5"/><path stroke="#fff" d="M2 4h4"/></svg></button>
                            </div>
                        </div>
                        <div class="vscroll vscroll-view">
                            <button aria-label="向上滚动"><svg viewBox="0 0 10 6"><path d="M1 5l4-4 4 4"/></svg></button>
                            <div class="thumb thumb-view"></div>
                            <button class="to-end" aria-label="向下滚动"><svg viewBox="0 0 10 6"><path d="M1 1l4 4 4-4"/></svg></button>
                        </div>
                    </div>
                    <div class="view-controls">
                        <span class="scale-text">1 : 100</span>
                        <button><svg><use href="#v-detail"/></svg></button>
                        <button><svg><use href="#v-style"/></svg></button>
                        <button><svg><use href="#v-sun"/></svg></button>
                        <button><svg><use href="#v-shadow"/></svg></button>
                        <button><svg><use href="#v-crop"/></svg></button>
                        <button><svg><use href="#v-cropvis"/></svg></button>
                        <button><svg><use href="#v-glasses"/></svg></button>
                        <button><svg><use href="#v-bulb"/></svg></button>
                        <button><svg><use href="#v-temp"/></svg></button>
                        <button><svg><use href="#v-lock"/></svg></button>
                        <button aria-label="向左滚动"><svg class="arrow" viewBox="0 0 6 10"><path d="M5 1L1 5l4 4"/></svg></button>
                        <div class="htrack"><div class="hthumb"></div></div>
                        <button aria-label="向右滚动"><svg class="arrow" viewBox="0 0 6 10"><path d="M1 1l4 4-4 4"/></svg></button>
                        <svg class="grip" viewBox="0 0 10 10"><path stroke="#aaa" stroke-width="2" stroke-dasharray="2 2" d="M8 1h2M4 5h6M0 9h10"/></svg>
                    </div>
                </section>
            </div>
        </main>

        <footer class="statusbar">
            <div class="worksets">
                <svg class="icon muted" viewBox="0 0 20 20"><path fill="#bbb" d="M2 18V9l3-1 2 1v9H5v-5H4v5zM8 18V7l3-1 2 1v11h-2v-5h-1v5zM14 18V9l3-1 2 1v9h-2v-5h-1v5zM4 5l3-2 2 2-3 2zM11 3l2-1 3 2-2 2z"/></svg>
                <select aria-label="工作集" disabled><option></option></select>
                <svg class="icon muted" viewBox="0 0 20 20"><path fill="#eee" d="M7 2h11v6H7z"/><path fill="#999" d="M10 8l-3 6-5 4h7l3-4z"/></svg>
                <span class="count">:0</span>
            </div>
            <div class="options">
                <svg class="icon" viewBox="0 0 20 20"><path fill="#fff" d="M2 2h16v16H2z"/><path stroke-width="2" d="M2 3h16"/><path d="M5 7h2v2H5zM9 8h6M9 12h6M9 15h6M6 10v5"/></svg>
                <svg class="icon muted" viewBox="0 0 20 20"><path fill="#999" d="M5 2h13v16H9M2 5v11l3-3 3 4"/></svg>
                <select aria-label="设计选项" disabled><option>主模型</option></select>
            </div>
            <div class="select-options">
                <svg class="icon" viewBox="0 0 20 20"><ellipse stroke="#c99a12" stroke-width="2" cx="5" cy="5" rx="4" ry="3"/><ellipse stroke="#c99a12" stroke-width="2" cx="14" cy="5" rx="4" ry="3"/><use href="#c-ptr"/></svg>
                <svg class="icon" viewBox="0 0 20 20"><path fill="#d6eafa" stroke="#2d7fc8" d="M2 13l9-9v5M1 16h9"/><path stroke="#c4191e" stroke-width="2" d="M12 1l6 6M18 1l-6 6"/><use href="#c-ptr"/></svg>
                <svg class="icon" viewBox="0 0 20 20"><path fill="#f1a65b" stroke="#a85a1c" d="M3 2h9v3h-2v4h3v3H2V9h3V5H3zM7 12v5"/><use href="#c-ptr"/></svg>
                <svg class="icon" viewBox="0 0 20 20"><path fill="#b9daf5" stroke="#2d7fc8" d="M2 4l8-2v13l-8 2z"/><path stroke="#c4191e" stroke-width="2" d="M12 1l6 6M18 1l-6 6"/><use href="#c-ptr"/></svg>
                <svg class="icon" viewBox="0 0 20 20"><path d="M6 1v10M1 6h10M4 3l2-2 2 2M4 9l2 2 2-2M3 4L1 6l2 2M9 4l2 2-2 2"/><use href="#c-ptr"/></svg>
                <svg class="icon" viewBox="0 0 20 20"><circle stroke="#a3a8a6" stroke-width="4" stroke-dasharray="4 1" cx="10" cy="10" r="6"/></svg>
                <svg class="icon" viewBox="0 0 20 20"><path fill="#a9b4c0" d="M2 3h16l-6 8v6l-4 2v-8z"/></svg>
                <span class="count">:0</span>
            </div>
        </footer>

        <div class="taskbar">
            <button class="tb-icon" aria-label="开始"><svg viewBox="0 0 20 20"><path fill="#fff" d="M2 4l7-1v6H2zM10 3l8-1v7h-8zM2 10h7v6l-7-1zM10 10h8v7l-8-1z"/></svg></button>
            <button class="tb-icon" aria-label="任务视图"><svg viewBox="0 0 20 20"><path stroke="#fff" stroke-width="1.5" d="M5 3h10v14H5zM3 4H1v12h2M17 4h2v12h-2"/></svg></button>
            <button class="tb-icon" aria-label="搜索工具"><svg viewBox="0 0 20 20"><circle stroke="#e8701a" stroke-width="3" cx="12" cy="7" r="5"/><path stroke="#e8701a" stroke-width="3" d="M9 11l-6 6"/></svg></button>
            <button class="tb-icon" aria-label="绘图工具"><svg viewBox="0 0 20 20"><path stroke="#7fb0d8" stroke-width="3" d="M9 2v13"/><path stroke="#d9cdbd" stroke-width="2" d="M9 12c-4 0-6 2-6 4s6 1 9-1 6-2 6-5-4-3-5-1"/></svg></button>
            <button class="tb-app"><svg viewBox="0 0 20 20"><g fill="#69b83a"><circle cx="6" cy="6" r="4"/><circle cx="14" cy="6" r="4"/><circle cx="6" cy="12" r="4"/><circle cx="14" cy="12" r="4"/></g><path stroke="#3f7d1d" d="M6 5l4 4 4-4M6 13l4-4 4 4"/><path stroke="#4a8e24" stroke-width="2" d="M10 9l2 10"/></svg>0草稿箱 - Clover</button>
            <div class="tb-pins">
                <button class="tb-icon" aria-label="浏览器"><svg viewBox="0 0 20 20"><path fill="#f3b71b" d="M10 10V2a8 8 0 0 1 7 4z"/><path fill="#e0395e" d="M10 10l7-4a8 8 0 0 1 0 8z"/><path fill="#a642c6" d="M10 10l7 4a8 8 0 0 1-7 4z"/><path fill="#3b7be0" d="M10 10v8a8 8 0 0 1-7-4z"/><path fill="#36b37a" d="M10 10l-7 4a8 8 0 0 1 0-8z"/><path fill="#ef6a2e" d="M10 10L3 6a8 8 0 0 1 7-4z"/><circle fill="#fff" cx="10" cy="10" r="2"/></svg></button>
                <button class="tb-icon" aria-label="微信"><svg viewBox="0 0 20 20"><ellipse fill="#7dce3e" cx="8" cy="8" rx="7" ry="6"/><ellipse fill="#e4efe0" cx="14" cy="13" rx="5" ry="4"/><path fill="#333" d="M5 6h1v1H5zM10 6h1v1h-1zM12 12h1v1h-1zM15 12h1v1h-1z"/></svg></button>
                <button class="tb-icon" aria-label="网盘"><svg viewBox="0 0 20 20"><rect fill="#f4f9fc" x="2" y="2" width="16" height="16" rx="3"/><g stroke="#3f9fe0" stroke-width="1.5"><circle cx="10" cy="8" r="3"/><circle cx="7" cy="12" r="3"/><circle stroke="#e27786" cx="13" cy="12" r="3"/></g></svg></button>
                <button class="tb-icon" aria-label="CAD 工具"><svg viewBox="0 0 20 20"><path fill="#1d5fae" d="M2 2h16v16H2z"/><path stroke="#fff" d="M4 7h3v6H4zM8 10h3M9 6v8M13 6h3v8h-3z"/></svg></button>
                <button class="tb-icon" aria-label="收藏"><svg viewBox="0 0 20 20"><path fill="#1b8ae8" d="M3 2h14v12h-4l-3 4-3-4H3z"/><path stroke="#fff" stroke-width="2" d="M10 4v8M6 6l8 4M14 6l-8 4"/></svg></button>
                <button class="tb-icon" aria-label="AutoCAD"><svg viewBox="0 0 20 20"><path fill="#c41e25" d="M3 2h14v16H3z"/><path fill="#fff" d="M10 3l5 13h-3l-1-3H8l-2 3H4z"/></svg></button>
                <button class="tb-icon" aria-label="音乐"><svg viewBox="0 0 20 20"><rect fill="#dc2430" x="2" y="2" width="16" height="16" rx="2"/><path stroke="#fff" stroke-width="1.5" d="M9 6H5v4h4V6v5c0 3-2 4-4 3M13 5c4 0 4 9-1 9M12 8h3"/></svg></button>
            </div>
            <button class="tb-app"><svg viewBox="0 0 20 20"><path stroke="#ddd" stroke-width="1.5" d="M2 5l2 9M6 4l-2 10M2 8h9M8 4v10l3-3M11 4v10M14 6v3M16 5v5M18 6v3"/></svg>屏幕录像专家</button>
            <div class="tb-pins">
                <button class="tb-icon" aria-label="Visual Studio"><svg viewBox="0 0 20 20"><path stroke="#8a58b8" stroke-width="3" d="M14 3v14L3 6v8z"/></svg></button>
                <button class="tb-icon" aria-label="WPS"><svg viewBox="0 0 20 20"><rect fill="#3b78e7" x="2" y="2" width="16" height="16" rx="2"/><path stroke="#fff" stroke-width="1.5" d="M5 6l3 8 2-6 2 6 3-8z"/></svg></button>
            </div>
            <button class="tb-app tb-current"><svg viewBox="0 0 20 20"><path fill="#f2f6f9" d="M2 1h16v18H2z"/><path fill="#1a5b9a" d="M5 3h6c5 0 5 7 1 7l3 7h-3l-3-6v6H5zM8 5v3c4 0 4-3 0-3z"/></svg>Autodesk Revit 201...</button>
            <div class="tray">
                <svg viewBox="0 0 20 20"><path stroke="#bbb" stroke-width="1.5" d="M2 5l2 9M6 4l-2 10M2 8h9M8 4v10l3-3M11 4v10M14 6v3M16 5v5M18 6v3"/></svg>
                <svg viewBox="0 0 20 20"><path stroke="#ddd" fill="#888" d="M6 3l10 12c-7 3-12-3-10-12z"/><path stroke="#ddd" d="M6 3c6 0 10 4 12 10"/></svg>
                <svg viewBox="0 0 20 20"><g fill="#d3222b"><circle cx="11" cy="5" r="2"/><circle cx="6" cy="9" r="3"/><circle cx="16" cy="8" r="2"/><circle cx="11" cy="11" r="2"/><circle cx="6" cy="15" r="2"/><circle cx="13" cy="15" r="2"/></g></svg>
                <svg viewBox="0 0 20 20"><path stroke="#fff" d="M7 3h6v4H7zM5 7h9v5M5 7v10h6M11 15l2 2 4-5"/></svg>
                <svg viewBox="0 0 20 20"><path stroke="#999" stroke-width="1.5" d="M6 17C6 10 11 6 18 5M10 17c0-4 3-8 8-8M14 17c0-2 1-4 4-4"/><path stroke="#fff" d="M4 1v6M1 4h6M2 2l4 4M6 2L2 6"/></svg>
                <svg viewBox="0 0 20 20"><path stroke="#fff" d="M2 8h3l4-4v12l-4-4H2zM12 7c2 2 2 4 0 6M14 5c3 3 3 7 0 10M16 3c4 4 4 10 0 14"/></svg>
                <span class="ime">中</span>
                <time>11:30</time>
                <svg class="notify" viewBox="0 0 20 20"><path fill="#fff" d="M2 3h16v12h-6l-3 3v-3H2z"/><path stroke="#222" d="M5 7h10M5 9h10M5 12h7"/></svg>
            </div>
        </div>
    </div>
</body>
</html>
```
FILE: styles.css
```css
* {
    box-sizing: border-box;
}

body {
    margin: 0;
    font-family: "Open Sans", "Noto Sans CJK SC", sans-serif;
    font-size: 12px;
    line-height: 18px;
    color: #2e3236;
    background-color: #d2d6d1;
}

h1, h2, p, ul {
    margin: 0;
    padding: 0;
    font-size: 12px;
    font-weight: normal;
}

button, input, select {
    font: inherit;
    color: inherit;
}

button {
    border: none;
    padding: 0;
    background: none;
    flex: none;
    display: flex;
    align-items: center;
    justify-content: center;
    white-space: nowrap;
}

select {
    appearance: none;
    border-radius: 0;
    background: no-repeat right 6px center / 10px 6px url("data:image/svg+xml,%3Csvg xmlns='http://www.w3.org/2000/svg' viewBox='0 0 10 6'%3E%3Cpath d='M1 1l4 4 4-4' fill='none' stroke='%23777'/%3E%3C/svg%3E");
}

svg {
    display: block;
    flex: none;
    fill: none;
    stroke: #3a4248;
    stroke-width: 1.2;
}

.sprite {
    position: absolute;
    width: 0;
    height: 0;
}

.app {
    display: flex;
    flex-direction: column;
    height: 100vh;
    overflow: hidden;
}

.icon {
    width: 18px;
    height: 18px;
}

.caret {
    border: 3px solid transparent;
    border-top: 4px solid #3a4248;
    border-bottom: none;
}

.caret-big {
    border-width: 4px;
    border-top-width: 5px;
    border-bottom: none;
}

.caret-btn {
    width: 12px;
}

.caret-btn::after {
    content: "";
    border: 3px solid transparent;
    border-top: 4px solid #4a4f53;
    border-bottom: none;
}

.caret-right::after {
    border: 4px solid transparent;
    border-left: 4px solid #3a4248;
    border-right: none;
}

.tool {
    width: 24px;
    height: 22px;
}

.tool.on {
    border: 1px solid #2a73b0;
    background-color: #b3d7f5;
}

/* Title bar */
.titlebar {
    flex: none;
    display: flex;
    height: 28px;
    padding-left: 5px;
}

.logo {
    width: 16px;
    height: 20px;
    margin-top: 2px;
    stroke: none;
}

.title {
    flex: 1;
    line-height: 22px;
    text-align: center;
}

.doc-name {
    margin-left: 16px;
}

.infocenter {
    display: flex;
    align-items: center;
    height: 22px;
}

.search {
    width: 180px;
    height: 22px;
    padding: 0 3px;
    border: 1px solid #111;
    border-radius: 0;
    background-color: #fff;
    font-style: italic;
}

.search::placeholder {
    color: #666;
    opacity: 1;
}

.login {
    gap: 4px;
    margin: 0 56px 0 3px;
}

.tool-wide {
    width: 35px;
}

.tool-wide + .tool-wide {
    border-left: 1px solid #bcc1bc;
}

.window-controls {
    display: flex;
    height: 22px;
    margin-left: 8px;
}

.window-controls button {
    width: 25px;
}

.glyph {
    width: 12px;
    height: 12px;
    stroke-width: 2;
}

/* Ribbon tabs */
.tabs {
    flex: none;
    display: flex;
    height: 20px;
}

.tab {
    padding: 0 10px;
}

.tab-file {
    padding: 0 2px 0 1px;
    color: #fff;
}

.tab.active {
    background-color: #f4f4f4;
}

.ribbon-toggle {
    gap: 4px;
    margin-left: 30px;
}

.toggle-icon {
    width: 16px;
    height: 10px;
}

/* Ribbon */
.ribbon {
    flex: none;
    display: flex;
    height: 95px;
    padding-left: 2px;
    background-color: #f4f4f4;
}

.group {
    display: flex;
    flex-direction: column;
    border-right: 1px solid #dbdcdc;
}

.group-body {
    display: flex;
    padding-top: 3px;
}

.group-name {
    position: relative;
    text-align: center;
    line-height: 22px;
}

.group-select {
    width: 49px;
    padding-left: 5px;
}

.group-select .group-name {
    display: flex;
    align-items: center;
    gap: 7px;
}

.group-graphics {
    width: 302px;
    padding-left: 4px;
}

.group-graphics .group-name {
    padding-right: 16px;
}

.launcher {
    position: absolute;
    right: 4px;
    top: 8px;
    width: 8px;
    height: 8px;
}

.group-present {
    width: 124px;
    padding-left: 3px;
}

.group-create {
    width: 464px;
    padding-left: 3px;
}

.group-sheets {
    width: 320px;
    padding-left: 2px;
}

.group-windows {
    border-right: none;
}

.group-windows .group-name {
    width: 206px;
}

.rbtn {
    position: relative;
    flex-direction: column;
    justify-content: flex-start;
    width: 38px;
    height: 72px;
    padding-top: 3px;
}

.rbtn svg {
    width: 32px;
    height: 32px;
    margin-bottom: 3px;
}

.rbtn.on {
    padding-top: 2px;
    border: 1px solid #2d6d9c;
    background: linear-gradient(#c3dcf6, #a9cbf0);
}

.rbtn:disabled {
    color: #b3b5b7;
}

.rbtn:disabled svg {
    opacity: 0.4;
}

.w-40 { width: 40px; }
.w-42 { width: 42px; }
.w-44 { width: 44px; }
.w-48 { width: 48px; }
.w-52 { width: 52px; }
.w-68 { width: 68px; }

.side::after,
.below::after {
    content: "";
    border: 3px solid transparent;
    border-top: 4px solid #3a4248;
    border-bottom: none;
}

.side::after {
    position: absolute;
    right: 2px;
    top: 51px;
}

.below::after {
    margin-top: 2px;
}

.rbtn.side svg {
    margin-bottom: 2px;
}

.small-stack {
    display: flex;
    flex-direction: column;
    gap: 6px;
    width: 61px;
    padding: 5px 0 0 5px;
}

.sbtn {
    justify-content: flex-start;
    gap: 6px;
    height: 18px;
}

.sbtn svg {
    width: 16px;
    height: 16px;
}

.short-rule {
    width: 1px;
    margin-right: 3px;
    background-color: #cfd1d2;
}

/* Quick access toolbar */
.quick-access {
    flex: none;
    display: flex;
    align-items: center;
    height: 25px;
    padding-left: 5px;
}

.rule {
    width: 1px;
    height: 22px;
    margin: 0 3px;
    background-color: #bfc4bf;
}

.tool-text {
    font-family: "Liberation Sans", Arial, sans-serif;
    font-size: 18px;
    font-weight: bold;
}

.customize {
    width: 16px;
    height: 22px;
}

.customize .caret {
    box-shadow: 0 -2px #d2d6d1, 0 -3px #3a4248;
}

.options-bar {
    flex: none;
    height: 24px;
    background-color: #f4f4f4;
}

/* Workspace */
.workspace {
    flex: 1;
    display: flex;
    gap: 4px;
    min-height: 0;
    padding: 0 3px 2px 0;
    background-color: #f4f4f4;
    border-bottom: 1px solid #8b908c;
}

.sidebar {
    flex: none;
    display: flex;
    flex-direction: column;
    gap: 6px;
    width: 290px;
}

.palette-title {
    display: flex;
    align-items: center;
    justify-content: space-between;
    height: 18px;
    margin-bottom: 2px;
    padding: 0 5px 0 4px;
    background-color: #bccde0;
}

.close svg {
    width: 10px;
    height: 10px;
    stroke: #111;
    stroke-width: 1.5;
}

.palette-body {
    margin: 0 2px 0 1px;
    border: 1px solid #dcdcde;
    border-top: 1px solid #6f6f73;
    border-left: 1px solid #6f6f73;
    background-color: #f2f0f4;
    color: #111;
}

.type-selector {
    display: flex;
    align-items: center;
    height: 72px;
    padding: 3px 2px 3px 3px;
    border-bottom: 1px solid #cfcfd2;
    line-height: 15px;
    color: #444;
}

.type-preview {
    padding: 16px;
    border: 1px solid #d0d0d3;
}

.type-preview svg {
    width: 32px;
    height: 32px;
}

.type-name {
    flex: 1;
    padding-left: 4px;
}

.instance {
    display: flex;
    align-items: center;
    gap: 6px;
    height: 27px;
}

.instance-select {
    width: 203px;
    height: 24px;
    padding: 0 4px;
    border: 1px solid #aaa9ac;
    background-color: #e1dfe2;
}

.edit-type {
    gap: 5px;
}

.edit-type svg {
    width: 16px;
    height: 16px;
}

.grid-wrap {
    display: flex;
    height: 266px;
    overflow: hidden;
}

.props {
    flex: none;
    align-self: flex-start;
    width: 269px;
    table-layout: fixed;
    border-collapse: collapse;
    background-color: #fdfdfd;
}

.col-name {
    width: 129px;
}

.col-link {
    width: 12px;
}

.props th {
    height: 20px;
    padding: 0 6px 0 2px;
    background-color: #d9dcd8;
    font-weight: normal;
    text-align: left;
    line-height: 18px;
}

.chevrons {
    float: right;
    width: 8px;
    height: 10px;
    margin-top: 4px;
    stroke: #111;
}

.props td {
    height: 20px;
    padding: 0 2px;
    border-right: 1px dotted #777;
    border-bottom: 1px dotted #777;
    line-height: 18px;
    white-space: nowrap;
}

.props td:first-child {
    padding-left: 10px;
}

.props td:last-child {
    padding: 0;
}

.props .readonly td {
    color: #858585;
}

.props .cell-input {
    padding: 0;
}

.props input {
    display: block;
    width: 100%;
    height: 19px;
    padding: 0 5px;
    border: 1px solid #111;
    background-color: #fff;
}

.props button {
    width: 100%;
    height: 18px;
    border: 1px solid #a9a9ac;
    border-bottom-width: 2px;
    border-right-width: 2px;
    background-color: #e1dfe2;
}

.vscroll {
    display: flex;
    flex-direction: column;
    flex: 1;
    background-color: #f1eff3;
}

.vscroll button {
    height: 17px;
}

.vscroll svg {
    width: 10px;
    height: 6px;
    stroke-width: 2;
}

.vscroll .to-end {
    margin-top: auto;
}

.thumb {
    margin: 0 1px;
    background-color: #cbcdcb;
}

.thumb-props {
    height: 78px;
}

.palette-foot {
    display: flex;
    align-items: center;
    justify-content: space-between;
    height: 25px;
    padding: 0 1px 0 2px;
}

.palette-foot a {
    color: #1b6bb5;
}

.apply {
    width: 73px;
    height: 19px;
    border: 1px solid #c0c2c0;
    background-color: #cccfcc;
    color: #8b8d8b;
}

/* Project browser */
.browser {
    flex: 1;
    display: flex;
    flex-direction: column;
    min-height: 0;
}

.tree-box {
    flex: 1;
    background-color: #fdfdfd;
}

.tree ul,
.tree {
    list-style: none;
    margin-left: 8px;
}

.tree ul {
    margin-left: 20px;
}

.tree li {
    position: relative;
}

/* dotted guide lines */
.tree li::before {
    content: "";
    position: absolute;
    left: 0;
    top: 0;
    bottom: 0;
    border-left: 1px dotted #999;
}

.tree li:last-child::before {
    bottom: auto;
    height: 10px;
}

.tree > li:first-child::before {
    top: 10px;
}

.node {
    display: flex;
    align-items: center;
    height: 20px;
    background: linear-gradient(90deg, #999 50%, transparent 50%) 0 10px / 2px 1px repeat-x;
}

.node::before {
    content: "";
    flex: none;
    width: 12px;
}

.tree ul .node::before {
    width: 15px;
}

.node > svg {
    width: 19px;
    height: 16px;
    padding-right: 3px;
    background-color: #fdfdfd;
}

.node > span {
    padding: 0 3px;
    line-height: 20px;
    background-color: #fdfdfd;
}

.node::after {
    content: "";
    flex: 1;
    align-self: stretch;
    background-color: #fdfdfd;
}

.node > .selected {
    background-color: #dedce0;
}

.node > .current {
    font-weight: bold;
}

.twist {
    position: absolute;
    left: -4px;
    top: 6px;
    width: 9px;
    height: 9px;
    border: 1px solid #999;
    background: linear-gradient(#444, #444) center / 5px 1px no-repeat, linear-gradient(#444, #444) center / 1px 5px no-repeat, #fff;
}

.twist.open {
    background: linear-gradient(#444, #444) center / 5px 1px no-repeat, #fff;
}

/* Drawing window */
.mdi {
    flex: 1;
    display: flex;
    padding: 1px 0 0 1px;
    border-top: 1px solid #77797b;
    border-left: 1px solid #77797b;
}

.view-window {
    flex: 1;
    display: flex;
    flex-direction: column;
    padding: 0 8px;
    border: 1px solid #1b2b33;
    border-bottom-width: 2px;
    border-radius: 6px 6px 0 0;
    background: linear-gradient(#9ab6d3, #bad0e9 30px);
}

.view-title {
    display: flex;
    align-items: center;
    gap: 3px;
    height: 31px;
    padding-top: 5px;
    padding-right: 1px;
}

.view-title h2 {
    flex: 1;
    padding-left: 1px;
    color: #111;
}

.rvt {
    width: 16px;
    height: 16px;
}

.view-title button {
    width: 31px;
    height: 18px;
    border: 1px solid #6f8dab;
    border-radius: 2px;
    background: linear-gradient(#c6daee, #a9c3df);
    box-shadow: inset 0 0 0 1px #d8e6f4;
}

.view-title button svg {
    width: 12px;
    height: 10px;
}

.view-title .close-view {
    border-color: #5e1711;
    background: linear-gradient(#e0a094, #c75a48 50%, #b53423 50%, #cd6550);
    box-shadow: inset 0 0 0 1px #dc9b90;
}

.view-frame {
    flex: 1;
    display: flex;
    border-top: 1px solid #555;
    border-left: 1px solid #777;
}

.canvas {
    position: relative;
    flex: 1;
    background-color: #fdfdfd;
}

.crop-region {
    position: absolute;
    left: 263px;
    top: 116px;
    width: 574px;
    height: 472px;
    border: 2px solid #a5a5a5;
    border-radius: 2px;
}

.marker {
    position: absolute;
    stroke: #111;
}

.marker-north {
    left: 658px;
    top: 131px;
    width: 18px;
    height: 22px;
}

.marker-west {
    left: 425px;
    top: 366px;
    width: 20px;
    height: 18px;
}

.marker-east {
    left: 888px;
    top: 367px;
    width: 20px;
    height: 16px;
}

.marker-south {
    left: 659px;
    top: 596px;
    width: 16px;
    height: 20px;
}

.click-spot {
    position: absolute;
    left: 888px;
    top: 620px;
    width: 30px;
    height: 30px;
    border-radius: 50%;
    background-color: #7abf7c;
}

.pointer {
    position: absolute;
    left: 902px;
    top: 635px;
    width: 17px;
    height: 29px;
}

.watermark {
    position: absolute;
    right: 52px;
    bottom: -14px;
    font-size: 33px;
    font-weight: bold;
    line-height: 48px;
    color: #e60c0c;
    white-space: nowrap;
}

.watermark span {
    font-family: "Liberation Mono", "Courier New", monospace;
    font-size: 30px;
}

.nav-bar {
    position: absolute;
    right: 2px;
    top: 1px;
    display: flex;
    flex-direction: column;
    align-items: center;
    width: 34px;
    height: 116px;
    border: 1px solid #bbb;
    border-radius: 6px;
    background-color: #f1f1f1;
    box-shadow: inset 0 0 0 1px #ddd;
}

.nav-bar svg {
    width: 20px;
    height: 20px;
}

.nav-bar .nav-dot {
    width: 8px;
    height: 8px;
    fill: #aaa;
    stroke: #999;
}

.nav-bar > button:first-child,
.nav-bar .nav-last {
    align-self: flex-end;
    margin: 2px 3px 10px;
}

.nav-bar .nav-last {
    margin: auto 3px 2px;
}

.nav-bar .caret {
    margin-top: 8px;
    border-top-color: #999;
}

.nav-bar hr {
    width: 26px;
    margin: 5px 0 6px;
    border: none;
    border-top: 1px solid #bbb;
}

.wheel {
    position: relative;
}

.wheel span {
    position: absolute;
    right: -5px;
    bottom: -4px;
    font-size: 10px;
    line-height: 12px;
    font-weight: bold;
    color: #7f9fc4;
}

.vscroll-view {
    flex: none;
    width: 17px;
}

.thumb-view {
    height: 17px;
    margin-top: auto;
}

.view-controls {
    flex: none;
    display: flex;
    align-items: center;
    height: 18px;
    margin-bottom: 7px;
    padding-left: 21px;
    border-left: 1px solid #777;
    background-color: #f1eff3;
}

.scale-text {
    width: 55px;
    color: #111;
}

.view-controls button {
    width: 21px;
}

.view-controls svg {
    width: 16px;
    height: 16px;
}

.view-controls .arrow {
    width: 6px;
    height: 10px;
    stroke-width: 2;
}

.view-controls .grip {
    width: 10px;
    height: 10px;
    margin: 0 3px 0 5px;
}

.htrack {
    flex: 1;
}

.hthumb {
    width: 17px;
    height: 16px;
    margin-left: 49.5%;
    background-color: #cbcdcb;
}

/* Status bar */
.statusbar {
    flex: none;
    display: flex;
    align-items: center;
    height: 23px;
    padding: 0 62px 0 949px;
    background-color: #d2d6d1;
}

.statusbar select {
    width: 204px;
    height: 19px;
    padding: 0 1px;
    border: 1px solid #ddd;
    background-color: #fdfdfd;
    color: #777;
    opacity: 1;
}

.worksets,
.options {
    display: flex;
    align-items: center;
    gap: 7px;
}

.options {
    margin-left: 20px;
}

.muted {
    stroke: #999;
}

.select-options {
    display: flex;
    gap: 8px;
    margin-left: auto;
}

.select-options .count {
    margin-left: -8px;
}

.count {
    color: #111;
}

/* Windows taskbar */
.taskbar {
    flex: none;
    display: flex;
    align-items: center;
    height: 30px;
    background-color: #0c0c08;
    color: #f2f2f2;
}

.taskbar svg {
    width: 20px;
    height: 20px;
    stroke: none;
}

.tb-icon {
    width: 38px;
    height: 30px;
}

.tb-app {
    justify-content: flex-start;
    gap: 2px;
    width: 152px;
    height: 30px;
    padding-left: 3px;
    box-shadow: inset 0 -2px #76b9ed;
}

.tb-current {
    width: 160px;
    padding-left: 5px;
    background-color: #3b3b38;
}

.tb-pins {
    display: flex;
    padding: 0 3px 0 4px;
}

.tb-pins .tb-icon {
    width: 37px;
}

.tray {
    display: flex;
    align-items: center;
    gap: 4px;
    height: 30px;
    margin-left: auto;
    margin-right: 4px;
    padding-right: 18px;
    border-right: 1px solid #55554f;
}

.ime {
    padding: 0 7px 0 6px;
}

.notify {
    margin-left: 13px;
}
```
